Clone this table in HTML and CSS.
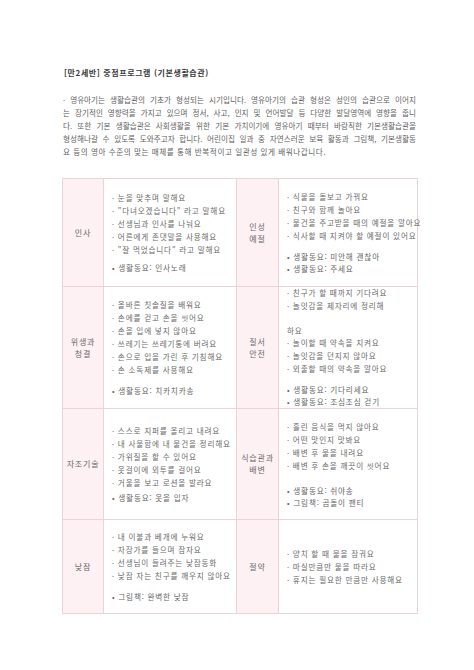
FILE: index.html
```html
<!DOCTYPE html>
<html lang="ko">
<head>
<meta charset="utf-8">
<title>만2세반 중점프로그램</title>
<link rel="stylesheet" href="styles.css">
</head>
<body>
<div class="page">
  <h1 class="title">[만2세반] 중점프로그램 (기본생활습관)</h1>
  <div class="intro">
    <span class="ln">· 영유아기는 생활습관의 기초가 형성되는 시기입니다. 영유아기의 습관 형성은 성인의 습관으로 이어지</span>
    <span class="ln">는 장기적인 영향력을 가지고 있으며 정서, 사고, 인지 및 언어발달 등 다양한 발달영역에 영향을 줍니</span>
    <span class="ln">다. 또한 기본 생활습관은 사회생활을 위한 기본 가치이기에 영유아기 때부터 바람직한 기본생활습관을</span>
    <span class="ln">형성해나갈 수 있도록 도와주고자 합니다. 어린이집 일과 중 자연스러운 보육 활동과 그림책, 기본생활동</span>
    <span class="ln last">요 등의 영아 수준의 맞는 매체를 통해 반복적이고 일관성 있게 배워나갑니다.</span>
  </div>
  <table class="grid">
    <colgroup>
      <col class="c-label1"><col class="c-body1"><col class="c-label2"><col class="c-body2">
    </colgroup>
    <tr class="r1">
      <th>인사</th>
      <td>
        <ul class="items">
          <li>· 눈을 맞추며 말해요</li>
          <li>· "다녀오겠습니다" 라고 말해요</li>
          <li>· 선생님과 인사를 나눠요</li>
          <li>· 어른에게 존댓말을 사용해요</li>
          <li>· "잘 먹었습니다" 라고 말해요</li>
        </ul>
        <ul class="notes">
          <li>• 생활동요: 인사노래</li>
        </ul>
      </td>
      <th>인성<br>예절</th>
      <td class="right">
        <ul class="items">
          <li>· 식물을 돌보고 가꿔요</li>
          <li>· 친구와 함께 놀아요</li>
          <li>· 물건을 주고받을 때의 예절을 알아요</li>
          <li>· 식사할 때 지켜야 할 예절이 있어요</li>
        </ul>
        <ul class="notes wide">
          <li>• 생활동요: 미안해 괜찮아</li>
          <li>• 생활동요: 주세요</li>
        </ul>
      </td>
    </tr>
    <tr class="r2">
      <th>위생과<br>청결</th>
      <td>
        <ul class="items">
          <li>· 올바른 칫솔질을 배워요</li>
          <li>· 손에를 걷고 손을 씻어요</li>
          <li>· 손을 입에 넣지 않아요</li>
          <li>· 쓰레기는 쓰레기통에 버려요</li>
          <li>· 손으로 입을 가린 후 기침해요</li>
          <li>· 손 소독제를 사용해요</li>
        </ul>
        <ul class="notes wide">
          <li>• 생활동요: 치카치카송</li>
        </ul>
      </td>
      <th>질서<br>안전</th>
      <td class="right tight">
        <ul class="items">
          <li>· 친구가 할 때까지 기다려요</li>
          <li>· 놀잇감을 제자리에 정리해</li>
          <li class="blank">&nbsp;</li>
          <li>하요</li>
          <li>· 놀이할 때 약속을 지켜요</li>
          <li>· 놀잇감을 던지지 않아요</li>
          <li>· 외출할 때의 약속을 알아요</li>
        </ul>
        <ul class="notes wide">
          <li>• 생활동요: 기다리세요</li>
          <li>• 생활동요: 조심조심 걷기</li>
        </ul>
      </td>
    </tr>
    <tr class="r3">
      <th>자조기술</th>
      <td>
        <ul class="items">
          <li>· 스스로 지퍼를 올리고 내려요</li>
          <li>· 내 사물함에 내 물건을 정리해요</li>
          <li>· 가위질을 할 수 있어요</li>
          <li>· 옷걸이에 외투를 걸어요</li>
          <li>· 거울을 보고 로션을 발라요</li>
        </ul>
        <ul class="notes narrow">
          <li>• 생활동요: 옷을 입자</li>
        </ul>
      </td>
      <th>식습관과<br>배변</th>
      <td class="right">
        <ul class="items">
          <li>· 흘린 음식을 먹지 않아요</li>
          <li>· 어떤 맛인지 맛봐요</li>
          <li>· 배변 후 물을 내려요</li>
          <li>· 배변 후 손을 깨끗이 씻어요</li>
        </ul>
        <ul class="notes widest">
          <li>• 생활동요: 쉬야송</li>
          <li>• 그림책: 곰돌이 팬티</li>
        </ul>
      </td>
    </tr>
    <tr class="r4">
      <th>낮잠</th>
      <td>
        <ul class="items">
          <li>· 내 이불과 베개에 누워요</li>
          <li>· 자장가를 들으며 잠자요</li>
          <li>· 선생님이 들려주는 낮잠동화</li>
          <li>· 낮잠 자는 친구를 깨우지 않아요</li>
        </ul>
        <ul class="notes wide">
          <li>• 그림책: 완벽한 낮잠</li>
        </ul>
      </td>
      <th>절약</th>
      <td class="right">
        <ul class="items">
          <li>· 양치 할 때 물을 잠궈요</li>
          <li>· 마실만큼만 물을 따라요</li>
          <li>· 휴지는 필요한 만큼만 사용해요</li>
        </ul>
      </td>
    </tr>
  </table>
</div>
</body>
</html>
```

FILE: styles.css
```css
html, body {
  margin: 0;
  padding: 0;
  background: #ffffff;
}

body {
  font-family: "Noto Sans CJK KR", "Noto Sans", sans-serif;
  color: #666666;
}

.page {
  width: 355px;
  padding: 67px 0 0 62px;
}

.title {
  margin: 0 0 0 2px;
  font-size: 8px;
  line-height: 12px;
  font-weight: 700;
  letter-spacing: 0.6px;
  color: #3a3a3a;
}

.intro {
  margin: 14px 0 0 1px;
  width: 353px;
  font-size: 7.6px;
  line-height: 13px;
  color: #5f5f5f;
}

.intro .ln {
  display: block;
  text-align: justify;
  text-align-last: justify;
  white-space: nowrap;
}

.intro .ln.last {
  text-align-last: left;
  letter-spacing: 0.55px;
}

.grid {
  margin-top: 20px;
  width: 355px;
  border-collapse: collapse;
  table-layout: fixed;
  font-size: 7.6px;
  letter-spacing: 0.8px;
}

.c-label1 { width: 41px; }
.c-body1 { width: 133px; }
.c-label2 { width: 42px; }
.c-body2 { width: 139px; }

.grid th,
.grid td {
  border: 1px solid #ecd3d7;
  vertical-align: middle;
  padding: 0;
}

.grid th {
  background: #fdf1f3;
  font-weight: 400;
  font-size: 8px;
  color: #6a6a6a;
  text-align: center;
  line-height: 12px;
}

.grid td {
  padding-left: 8px;
  background: #ffffff;
}

.grid td.right {
  padding-left: 8px;
}

.r1 { height: 108px; }
.r2 { height: 117px; }
.r3 { height: 111px; }
.r4 { height: 94px; }

.items,
.notes {
  list-style: none;
  margin: 0;
  padding: 0;
  white-space: nowrap;
}

.items li {
  line-height: 13px;
  color: #6a6a6a;
}

.tight .items li {
  line-height: 12.6px;
}

.notes {
  margin-top: 6px;
}

.notes.narrow { margin-top: 3px; }
.notes.wide { margin-top: 9px; }
.notes.widest { margin-top: 13px; }

.notes li {
  line-height: 12px;
  color: #666666;
}
```
